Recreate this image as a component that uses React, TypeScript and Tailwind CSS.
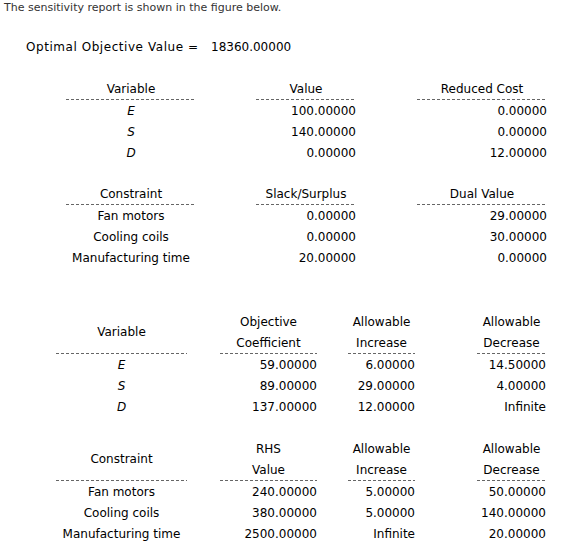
type Col = {
  width: string;
  ml: string;
  header: string[];
  values: string[];
  italic?: boolean;
  center?: boolean;
};

function Dashes() {
  return <div className="h-px w-full bg-[linear-gradient(to_right,#666_3px,transparent_3px)] bg-[length:5px_1px]" />;
}

function Column({ col, headerH }: { col: Col; headerH: string }) {
  return (
    <div className={`flex flex-col ${col.width} ${col.ml}`}>
      <div className={`flex flex-col justify-center items-center ${headerH}`}>
        {col.header.map((h) => (
          <div key={h} className="h-[21px] flex items-center whitespace-nowrap">
            {h}
          </div>
        ))}
      </div>
      <Dashes />
      {col.values.map((v, i) => (
        <div
          key={i}
          className={`h-[21px] flex items-center whitespace-nowrap ${col.center ? "justify-center" : "justify-end"} ${col.italic ? "italic" : ""}`}
        >
          {v}
        </div>
      ))}
    </div>
  );
}

const table1: Col[] = [
  { width: "w-[130px]", ml: "ml-[66px]", header: ["Variable"], values: ["E", "S", "D"], italic: true, center: true },
  { width: "w-[100px]", ml: "ml-[60px]", header: ["Value"], values: ["100.00000", "140.00000", "0.00000"] },
  { width: "w-[130px]", ml: "ml-[61px]", header: ["Reduced Cost"], values: ["0.00000", "0.00000", "12.00000"] },
];

const table2: Col[] = [
  { width: "w-[130px]", ml: "ml-[66px]", header: ["Constraint"], values: ["Fan motors", "Cooling coils", "Manufacturing time"], center: true },
  { width: "w-[100px]", ml: "ml-[60px]", header: ["Slack/Surplus"], values: ["0.00000", "0.00000", "20.00000"] },
  { width: "w-[130px]", ml: "ml-[61px]", header: ["Dual Value"], values: ["29.00000", "30.00000", "0.00000"] },
];

const table3: Col[] = [
  { width: "w-[131px]", ml: "ml-[56px]", header: ["Variable"], values: ["E", "S", "D"], italic: true, center: true },
  { width: "w-[97px]", ml: "ml-[33px]", header: ["Objective", "Coefficient"], values: ["59.00000", "89.00000", "137.00000"] },
  { width: "w-[67px]", ml: "ml-[31px]", header: ["Allowable", "Increase"], values: ["6.00000", "29.00000", "12.00000"] },
  { width: "w-[69px]", ml: "ml-[62px]", header: ["Allowable", "Decrease"], values: ["14.50000", "4.00000", "Infinite"] },
];

const table4: Col[] = [
  { width: "w-[131px]", ml: "ml-[56px]", header: ["Constraint"], values: ["Fan motors", "Cooling coils", "Manufacturing time"], center: true },
  { width: "w-[97px]", ml: "ml-[33px]", header: ["RHS", "Value"], values: ["240.00000", "380.00000", "2500.00000"] },
  { width: "w-[67px]", ml: "ml-[31px]", header: ["Allowable", "Increase"], values: ["5.00000", "5.00000", "Infinite"] },
  { width: "w-[69px]", ml: "ml-[62px]", header: ["Allowable", "Decrease"], values: ["50.00000", "140.00000", "20.00000"] },
];

function Table({ cols, headerH, mt }: { cols: Col[]; headerH: string; mt: string }) {
  return (
    <div className={`flex ${mt}`}>
      {cols.map((c, i) => (
        <Column key={i} col={c} headerH={headerH} />
      ))}
    </div>
  );
}

export default function App() {
  return (
    <div className="w-[584px] h-[559px] bg-white text-[12px] text-black font-['DejaVu_Sans',Verdana,sans-serif] overflow-hidden">
      <div className="h-[17px] flex items-center pl-[4px] text-[11px] text-[#333]">
        The sensitivity report is shown in the figure below.
      </div>
      <div className="mt-[19px] h-[21px] flex items-center">
        <span className="ml-[26px] w-[185px] whitespace-nowrap tracking-[0.55px]">Optimal Objective Value =</span>
        <span>18360.00000</span>
      </div>
      <Table cols={table1} headerH="h-[20px]" mt="mt-[22px]" />
      <Table cols={table2} headerH="h-[20px]" mt="mt-[21px]" />
      <Table cols={table3} headerH="h-[42px]" mt="mt-[43px]" />
      <Table cols={table4} headerH="h-[42px]" mt="mt-[21px]" />
    </div>
  );
}
